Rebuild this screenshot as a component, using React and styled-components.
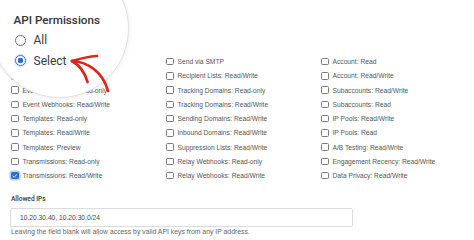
import React from 'react'
import styled, { createGlobalStyle } from 'styled-components'

const GlobalStyle = createGlobalStyle`
  html, body {
    margin: 0;
    padding: 0;
    background: #ffffff;
  }
  body {
    font-family: "Liberation Sans", Arial, sans-serif;
    -webkit-font-smoothing: antialiased;
  }
`

const Page = styled.div`
  position: relative;
  width: 474px;
  height: 240px;
  overflow: hidden;
  background: #fff;
`

const Form = styled.div`
  padding: 54.5px 0 0 11px;
`

const Grid = styled.div`
  display: grid;
  grid-template-columns: repeat(3, 155px);
  grid-template-rows: repeat(9, 14.25px);
  grid-auto-flow: column;
`

const Option = styled.label`
  display: flex;
  align-items: center;
  gap: 4px;
  font-size: 6.7px;
  color: #555;
  white-space: nowrap;
`

const Box = styled.span`
  box-sizing: border-box;
  width: 7.5px;
  height: 7.5px;
  border-radius: 1.5px;
  flex: none;
  border: 1px solid ${({ checked }) => (checked ? '#2f6fd0' : '#7a7a7a')};
  background: ${({ checked }) => (checked ? '#2f6fd0' : '#fff')};
  box-shadow: ${({ checked }) => (checked ? '0 0 0 1.5px #b8cff3' : 'none')};
  display: flex;
  align-items: center;
  justify-content: center;
`

const FieldLabel = styled.div`
  margin-top: 12px;
  font-family: Roboto, "Liberation Sans", sans-serif;
  font-weight: 500;
  font-size: 6.6px;
  color: #333;
`

const Input = styled.div`
  box-sizing: border-box;
  margin-top: 5px;
  width: 343px;
  height: 19px;
  margin-left: -1px;
  border: 1px solid #dcdcdc;
  border-radius: 2px;
  padding-left: 9px;
  display: flex;
  align-items: center;
  font-size: 6.7px;
  color: #444;
`

const Hint = styled.div`
  margin-top: 1px;
  font-size: 6.85px;
  color: #666;
`

const Magnifier = styled.div`
  position: absolute;
  left: -10.5px;
  top: -41px;
  width: 139px;
  height: 139px;
  box-sizing: border-box;
  border-radius: 50%;
  background: #fff;
  border: 1.5px solid #e2e2e2;
  box-shadow: 0 0 4px rgba(0, 0, 0, 0.1);
  padding: 52.5px 0 0 23px;
  font-family: Roboto, "Liberation Sans", sans-serif;
`

const Title = styled.div`
  font-size: 11.7px;
  line-height: 14px;
  font-weight: 500;
  color: #333;
  margin-bottom: 3.5px;
`

const RadioRow = styled.div`
  display: flex;
  align-items: center;
  gap: 8px;
  height: 20.5px;
  margin-left: 1px;
  font-size: 12px;
  color: #3a3a3a;
`

const Radio = styled.span`
  box-sizing: border-box;
  width: 11px;
  height: 11px;
  border-radius: 50%;
  flex: none;
  border: ${({ checked }) => (checked ? '1.5px solid #2a6fd8' : '1.2px solid #6e6e6e')};
  background: ${({ checked }) =>
    checked ? 'radial-gradient(circle, #2a6fd8 0 2.6px, #fff 3px)' : '#fff'};
  box-shadow: ${({ checked }) => (checked ? '0 0 0 1px #cfe0fa' : 'none')};
`

const Arrow = styled.svg`
  position: absolute;
  left: 0;
  top: 0;
  pointer-events: none;
`

// first two labels of column one sit fully under the magnifier, so only their boxes exist
const columns = [
  [
    '',
    '',
    'Event Webhooks: Read-only',
    'Event Webhooks: Read/Write',
    'Templates: Read-only',
    'Templates: Read/Write',
    'Templates: Preview',
    'Transmissions: Read-only',
    'Transmissions: Read/Write',
  ],
  [
    'Send via SMTP',
    'Recipient Lists: Read/Write',
    'Tracking Domains: Read-only',
    'Tracking Domains: Read/Write',
    'Sending Domains: Read/Write',
    'Inbound Domains: Read/Write',
    'Suppression Lists: Read/Write',
    'Relay Webhooks: Read-only',
    'Relay Webhooks: Read/Write',
  ],
  [
    'Account: Read',
    'Account: Read/Write',
    'Subaccounts: Read/Write',
    'Subaccounts: Read',
    'IP Pools: Read/Write',
    'IP Pools: Read',
    'A/B Testing: Read/Write',
    'Engagement Recency: Read/Write',
    'Data Privacy: Read/Write',
  ],
]

const checkedOnes = ['Transmissions: Read/Write']

export default function App() {
  return (
    <Page>
      <GlobalStyle />
      <Form>
        <Grid>
          {columns.flat().map((name, i) => {
            const on = checkedOnes.includes(name)
            return (
              <Option key={i}>
                <Box checked={on}>
                  {on && (
                    <svg width="6" height="6" viewBox="0 0 6 6">
                      <path d="M1 3.1 L2.4 4.4 L5 1.4" fill="none" stroke="#fff" strokeWidth="0.9" strokeLinecap="round" strokeLinejoin="round" />
                    </svg>
                  )}
                </Box>
                {name}
              </Option>
            )
          })}
        </Grid>
        <FieldLabel>Allowed IPs</FieldLabel>
        <Input>10.20.30.40, 10.20.30.0/24</Input>
        <Hint>Leaving the field blank will allow access by valid API keys from any IP address.</Hint>
      </Form>

      <Magnifier>
        <Title>API Permissions</Title>
        <RadioRow>
          <Radio />
          All
        </RadioRow>
        <RadioRow>
          <Radio checked />
          Select
        </RadioRow>
      </Magnifier>

      <Arrow width="130" height="100" viewBox="0 0 130 100">
        <g fill="none" stroke="#e2231a" strokeWidth="2.7" strokeLinecap="round" strokeLinejoin="round">
          <path d="M72 61 C 82 58, 90 56.5, 97 56" />
          <path d="M72 61 C 79 65, 85 73, 87.5 82" />
          <path d="M72 61 C 88 62, 103 72, 108 91" />
        </g>
      </Arrow>
    </Page>
  )
}
